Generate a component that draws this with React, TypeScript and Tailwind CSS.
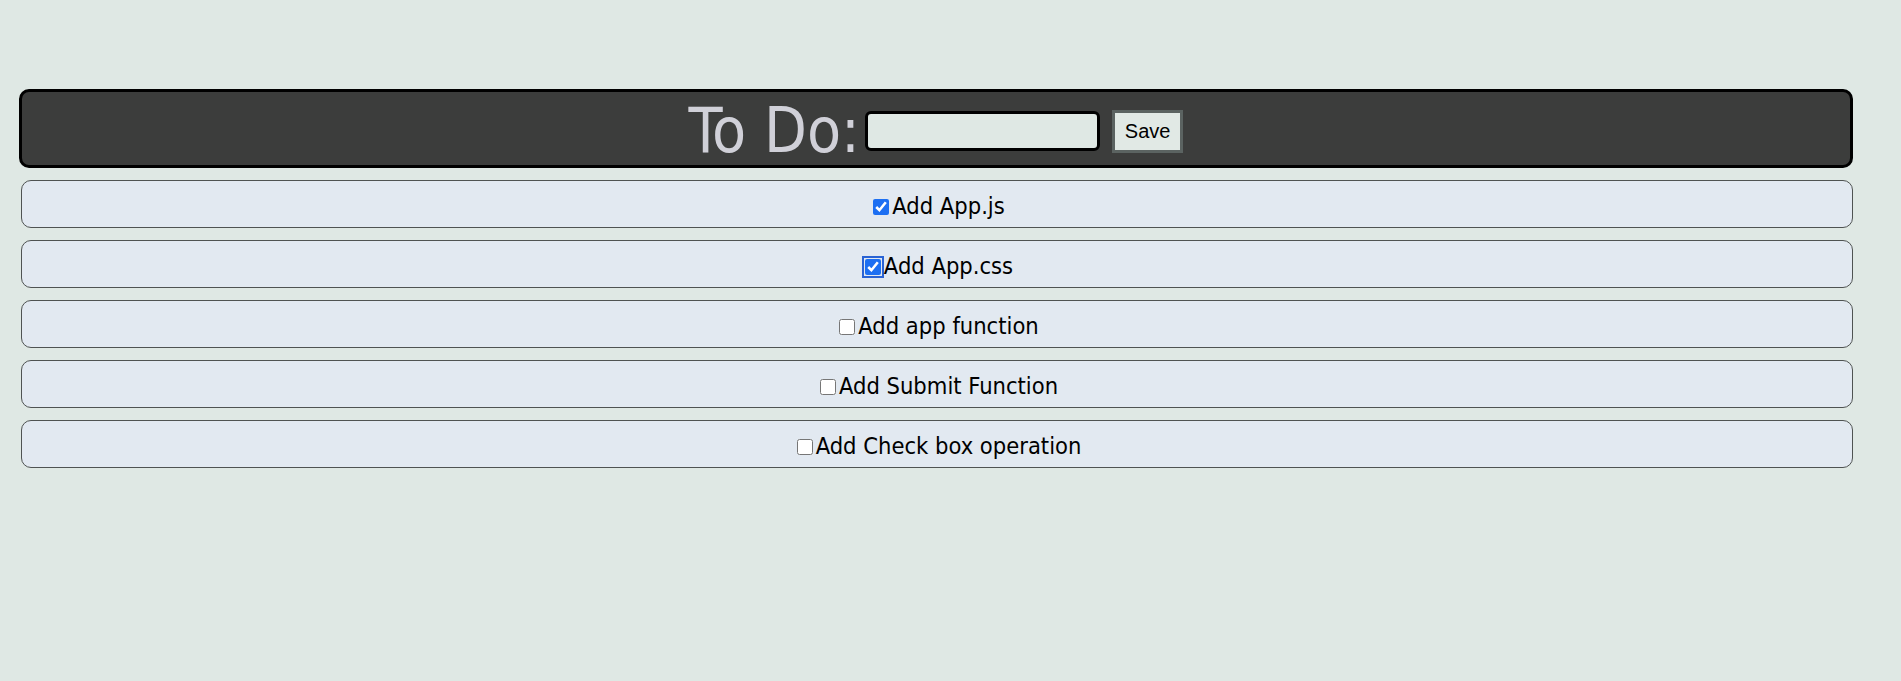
import { useState } from "react";

interface Todo {
  id: number;
  text: string;
  done: boolean;
  focused?: boolean;
}

const initialTodos: Todo[] = [
  { id: 1, text: "Add App.js", done: true },
  { id: 2, text: "Add App.css", done: true, focused: true },
  { id: 3, text: "Add app function", done: false },
  { id: 4, text: "Add Submit Function", done: false },
  { id: 5, text: "Add Check box operation", done: false },
];

const App = () => {
  const [todos, setTodos] = useState<Todo[]>(initialTodos);
  const [value, setValue] = useState("");

  const toggle = (id: number) =>
    setTodos(todos.map((t) => (t.id === id ? { ...t, done: !t.done } : t)));

  const save = () => {
    if (!value.trim()) return;
    setTodos([...todos, { id: Date.now(), text: value, done: false }]);
    setValue("");
  };

  return (
    <div className="min-h-screen bg-[#dfe8e4] pt-[89px] font-['DejaVu_Sans_Condensed','DejaVu_Sans',sans-serif] font-stretch-condensed">
      <div className="ml-[19px] flex w-[1834px] flex-col gap-[12px]">
        {/* Header */}
        <div className="flex h-[79px] items-center justify-center rounded-[10px] border-[3px] border-black bg-[#3c3d3c] pt-[5px]">
          <h1 className="text-[62px] leading-none text-[#d0d0d8]">To Do:</h1>
          <input
            type="text"
            value={value}
            onChange={(e) => setValue(e.target.value)}
            className="ml-[5px] h-[40px] w-[235px] rounded-[6px] border-[3px] border-black bg-[#dfe8e4] px-2 outline-none"
          />
          <button
            onClick={save}
            className="ml-[12px] h-[43px] border-[3px] border-[#5b6361] bg-[#e1e9e5] px-[10px] font-['Liberation_Sans',Arial,sans-serif] text-[20px] text-black"
          >
            Save
          </button>
        </div>

        {/* List */}
        {todos.map((todo) => (
          <div
            key={todo.id}
            className="ml-[2px] flex h-[48px] items-center justify-center rounded-[10px] border border-[#4f5352] bg-[#e2e9f1] pt-[5px]"
          >
            <input
              type="checkbox"
              checked={todo.done}
              onChange={() => toggle(todo.id)}
              className={
                todo.focused
                  ? "mt-[3px] mr-[3px] mb-[3px] ml-[4px] h-[16px] w-[16px] rounded-[3px] accent-[#1d6ff2] outline-2 outline-offset-[1px] outline-[#2a63d4]"
                  : "mt-[3px] mr-[3px] mb-[3px] ml-[4px] h-[16px] w-[16px] accent-[#1d6ff2]"
              }
            />
            <span className="text-[23.5px] leading-none text-black">
              {todo.text}
            </span>
          </div>
        ))}
      </div>
    </div>
  );
};

export default App;
